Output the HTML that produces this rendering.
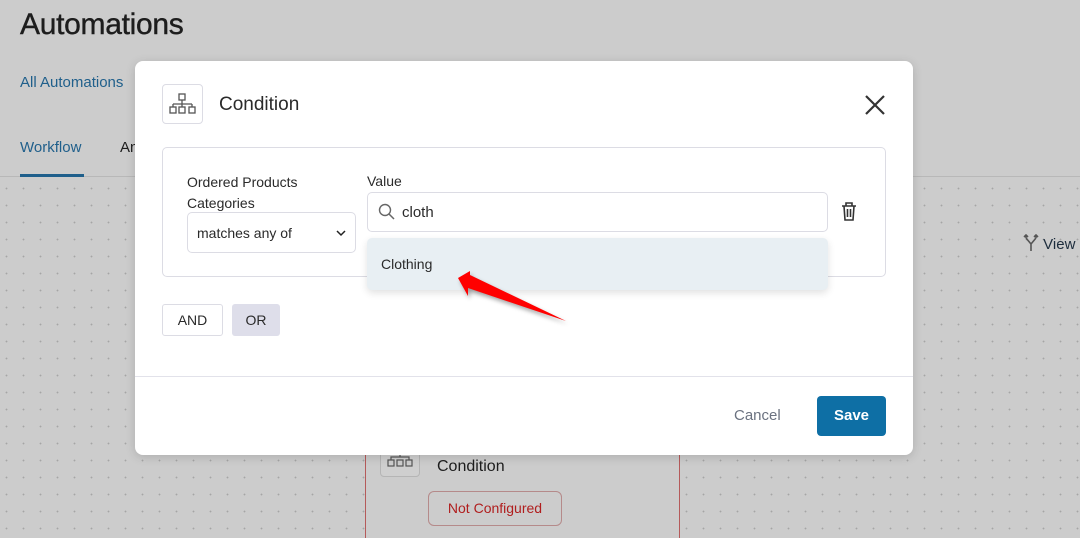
<!DOCTYPE html>
<html><head><style>
*{box-sizing:border-box;margin:0;padding:0}
html,body{width:1080px;height:538px;overflow:hidden}
body{position:relative;background:#cccccc;font-family:"Liberation Sans",sans-serif;color:#1e1e1e}
.dots{position:absolute;left:0;top:178px;width:1080px;height:360px;background-image:radial-gradient(circle,#a5a5a5 0.7px,transparent 1.1px);background-size:17px 17px;background-position:-2px 2px}
.abs{position:absolute}
.modal{position:absolute;left:135px;top:61px;width:778px;height:394px;background:#fff;border-radius:8px;box-shadow:0 2px 10px rgba(0,0,0,.15)}
</style></head><body>
<div class="dots"></div>
<div class="abs" style="left:20px;top:8px;font-size:30px;color:#1d1d1d;letter-spacing:-0.3px;-webkit-text-stroke:0.4px #1d1d1d">Automations</div>
<div class="abs" style="left:20px;top:74px;font-size:15px;color:#1f5f8b">All Automations</div>
<div class="abs" style="left:20px;top:139px;font-size:15px;color:#1f5f8b">Workflow</div>
<div class="abs" style="left:120px;top:139px;font-size:15px;color:#1d1d1d">An</div>
<div class="abs" style="left:0;top:176px;width:1080px;height:1px;background:#b8b8b8"></div>
<div class="abs" style="left:20px;top:174px;width:64px;height:3px;background:#1f5f8b"></div>
<div class="abs" style="left:1023px;top:234px;font-size:15px;color:#1d2d3d">
<svg width="16" height="18" viewBox="0 0 16 18" style="vertical-align:-3px"><path d="M8 17V10M8 10L3 4M8 10l5-6M3 4V1M1 3l2-2 2 2M13 4V1M11 3l2-2 2 2" stroke="#555" stroke-width="1.6" fill="none"/></svg> View</div>
<!-- bottom node -->
<div class="abs" style="left:365px;top:440px;width:315px;height:120px;border:1px solid #b55a5a;border-radius:10px;background:#cccccc"></div>
<div class="abs" style="left:380px;top:447px;width:40px;height:30px;border:1px solid #b5b5b5;border-radius:4px;background:#cfcfcf">
 <svg width="38" height="28" viewBox="0 0 38 28"><g fill="none" stroke="#555" stroke-width="1.2"><path d="M10 12V9h18v3M19 6v3"/><rect x="7" y="12" width="6" height="6"/><rect x="16" y="12" width="6" height="6"/><rect x="25" y="12" width="6" height="6"/></g></svg>
</div>
<div class="abs" style="left:437px;top:458px;font-size:16px;color:#1d1d1d">Condition</div>
<div class="abs" style="left:428px;top:491px;width:134px;height:35px;border:1px solid #b58a8a;border-radius:6px;font-size:14px;color:#b01e1e;text-align:center;line-height:33px">Not Configured</div>

<div class="modal">
 <div class="abs" style="left:27px;top:23px;width:41px;height:40px;border:1px solid #dcdce4;border-radius:4px">
  <svg width="39" height="38" viewBox="0 0 39 38"><g fill="none" stroke="#555" stroke-width="1.3"><rect x="16" y="9" width="6" height="6"/><path d="M19 15v4M10 19h19M10 19v3M19 19v3M29 19v3"/><rect x="7" y="22" width="6" height="6"/><rect x="16" y="22" width="6" height="6"/><rect x="26" y="22" width="6" height="6"/></g></svg>
 </div>
 <div class="abs" style="left:84px;top:33px;font-size:19px;color:#2a2a2a">Condition</div>
 <svg class="abs" style="left:729px;top:33px" width="22" height="22"><path d="M2 2l18 18M20 2L2 20" stroke="#333" stroke-width="2.2"/></svg>
 <div class="abs" style="left:27px;top:86px;width:724px;height:130px;border:1px solid #dcdce4;border-radius:5px"></div>
 <div class="abs" style="left:52px;top:111px;font-size:14px;line-height:21px;color:#2a2a2a">Ordered Products<br>Categories</div>
 <div class="abs" style="left:52px;top:151px;width:169px;height:41px;border:1px solid #dcdce4;border-radius:5px;font-size:14px;line-height:40px;padding-left:9px;color:#2a2a2a">matches any of
  <svg class="abs" style="left:148px;top:16px" width="10" height="8"><path d="M1 2l4 4 4-4" stroke="#222" stroke-width="1.5" fill="none"/></svg></div>
 <div class="abs" style="left:232px;top:112px;font-size:14px;color:#2a2a2a">Value</div>
 <div class="abs" style="left:232px;top:131px;width:461px;height:40px;border:1px solid #dcdce4;border-radius:5px;font-size:15px;line-height:39px;padding-left:34px;color:#2a2a2a">cloth
  <svg class="abs" style="left:10px;top:10px" width="18" height="18"><circle cx="7" cy="7" r="5.5" stroke="#666" stroke-width="1.4" fill="none"/><path d="M11 11l5 5" stroke="#666" stroke-width="1.5"/></svg></div>
 <svg class="abs" style="left:705px;top:140px" width="18" height="21"><g fill="none" stroke="#333" stroke-width="1.6"><path d="M2 5h14M6 5V2h6v3M4 5l1 14h8l1-14M7.5 8v8M10.5 8v8"/></g></svg>
 <div class="abs" style="left:232px;top:177px;width:461px;height:52px;background:#e8eff3;border-radius:5px;box-shadow:0 3px 8px rgba(0,0,0,.12);font-size:14px;line-height:52px;padding-left:14px;color:#2a2a2a">Clothing</div>
 <svg class="abs" style="left:300px;top:200px" width="150" height="70"><path d="M23 17L35 10 35 14 131 60 33 27 33 35Z" fill="#f00" style="filter:drop-shadow(2px 3px 2px rgba(0,0,0,.35))"/></svg>
 <div class="abs" style="left:27px;top:243px;width:61px;height:32px;border:1px solid #dcdce4;border-radius:3px;font-size:14px;line-height:30px;text-align:center;color:#2a2a2a">AND</div>
 <div class="abs" style="left:97px;top:243px;width:48px;height:32px;background:#dedeea;border-radius:3px;font-size:14px;line-height:32px;text-align:center;color:#2a2a2a">OR</div>
 <div class="abs" style="left:0;top:315px;width:778px;height:1px;background:#e2e2ea"></div>
 <div class="abs" style="left:599px;top:346px;font-size:15px;color:#6b7280">Cancel</div>
 <div class="abs" style="left:682px;top:335px;width:69px;height:40px;background:#0e6fa5;border-radius:4px;color:#fff;font-size:15px;font-weight:bold;text-align:center;line-height:40px">Save</div>
</div>
</body></html>
